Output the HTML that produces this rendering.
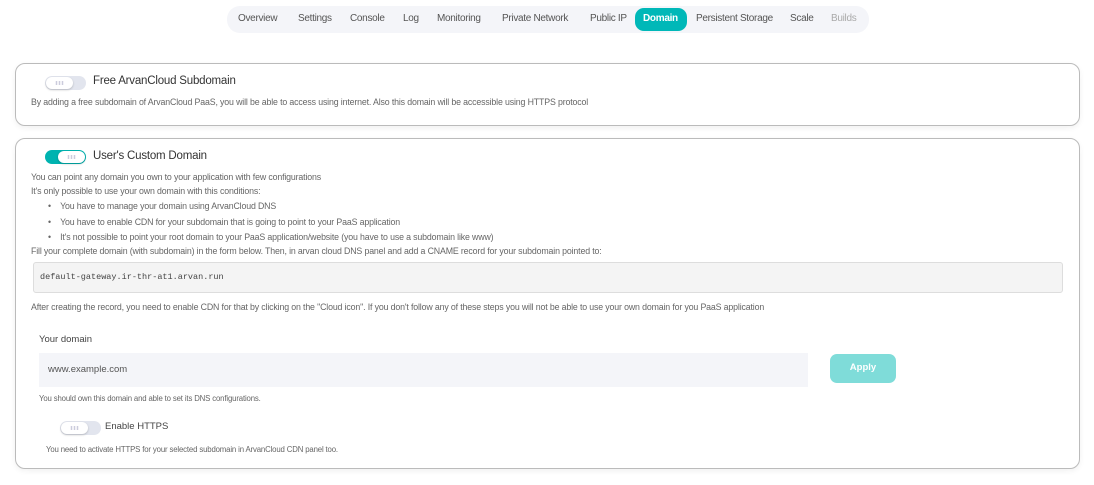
<!DOCTYPE html>
<html><head><style>
*{margin:0;padding:0;box-sizing:border-box}
body{width:1094px;height:485px;background:#fff;font-family:"Liberation Sans",sans-serif;color:#555;position:relative;overflow:hidden}
.a{position:absolute;white-space:nowrap}
.s{font-size:8.8px;letter-spacing:-0.15px;color:#666}
.nav{position:absolute;left:227px;top:6px;width:642px;height:27px;background:#f4f5f9;border-radius:13px}
.nav span{position:absolute;top:7px;font-size:10px;letter-spacing:-0.3px;color:#555}
.card{position:absolute;left:15px;width:1065px;border:1px solid #bbb;border-radius:10px;box-shadow:0 2px 6px rgba(0,0,0,.06)}
.tg{position:absolute;width:41px;height:14px;border-radius:7px;background:#e2e5ee}
.tg i{position:absolute;top:1px;width:27px;height:12px;border-radius:6px;background:#fff;box-shadow:0 1px 2px rgba(0,0,0,.2)}
.tg i:after{content:"";position:absolute;left:9px;top:4px;width:9px;height:4px;background:radial-gradient(circle,#ccd 0.8px,transparent 1px) 0 0/3px 2px}
.h{font-size:11.5px;color:#333;letter-spacing:-0.2px}
</style></head><body>
<div class="nav">
<span style="left:11px">Overview</span><span style="left:71px">Settings</span><span style="left:123px">Console</span><span style="left:176px">Log</span><span style="left:210px">Monitoring</span><span style="left:275px">Private Network</span><span style="left:363px">Public IP</span>
<div style="position:absolute;left:408px;top:2px;width:52px;height:23px;border-radius:9px;background:#00b8b8"></div>
<span style="left:416px;color:#fff;font-weight:bold">Domain</span>
<span style="left:469px">Persistent Storage</span><span style="left:563px">Scale</span><span style="left:604px;color:#aaa">Builds</span>
</div>
<div class="card" style="top:63px;height:63px"></div>
<div class="tg" style="left:45px;top:76px"><i style="left:1px"></i></div>
<div class="a h" style="left:93px;top:75px">Free ArvanCloud Subdomain</div>
<div class="a s" style="left:31px;top:97px">By adding a free subdomain of ArvanCloud PaaS, you will be able to access using internet. Also this domain will be accessible using HTTPS protocol</div>

<div class="card" style="top:138px;height:331px"></div>
<div class="tg" style="left:45px;top:150px;background:#00b3b0"><i style="left:13px"></i></div>
<div class="a h" style="left:93px;top:150px">User's Custom Domain</div>
<div class="a s" style="left:31px;top:172px">You can point any domain you own to your application with few configurations</div>
<div class="a s" style="left:31px;top:186px">It's only possible to use your own domain with this conditions:</div>
<div class="a s" style="left:48px;top:201px">•&nbsp;&nbsp;&nbsp;&nbsp;You have to manage your domain using ArvanCloud DNS</div>
<div class="a s" style="left:48px;top:217px">•&nbsp;&nbsp;&nbsp;&nbsp;You have to enable CDN for your subdomain that is going to point to your PaaS application</div>
<div class="a s" style="left:48px;top:232px">•&nbsp;&nbsp;&nbsp;&nbsp;It's not possible to point your root domain to your PaaS application/website (you have to use a subdomain like www)</div>
<div class="a s" style="left:31px;top:246px">Fill your complete domain (with subdomain) in the form below. Then, in arvan cloud DNS panel and add a CNAME record for your subdomain pointed to:</div>
<div class="a" style="left:33px;top:262px;width:1030px;height:31px;background:#f4f4f4;border:1px solid #ddd;border-radius:3px"></div>
<div class="a" style="left:40px;top:272px;font-family:'Liberation Mono',monospace;font-size:8.5px;color:#444">default-gateway.ir-thr-at1.arvan.run</div>
<div class="a s" style="left:31px;top:302px">After creating the record, you need to enable CDN for that by clicking on the "Cloud icon". If you don't follow any of these steps you will not be able to use your own domain for you PaaS application</div>
<div class="a" style="left:39px;top:334px;font-size:9.5px;color:#444">Your domain</div>
<div class="a" style="left:39px;top:353px;width:769px;height:34px;background:#f4f5f9"></div>
<div class="a" style="left:48px;top:364px;font-size:9.5px;color:#555">www.example.com</div>
<div class="a" style="left:830px;top:354px;width:66px;height:29px;border-radius:7px;background:#7fdcd9;color:#fff;font-size:9.5px;font-weight:bold;text-align:center;line-height:27px">Apply</div>
<div class="a s" style="left:39px;top:394px;font-size:7.8px">You should own this domain and able to set its DNS configurations.</div>
<div class="tg" style="left:60px;top:421px"><i style="left:1px"></i></div>
<div class="a" style="left:105px;top:421px;font-size:9.5px;color:#444">Enable HTTPS</div>
<div class="a s" style="left:46px;top:445px;font-size:7.8px">You need to activate HTTPS for your selected subdomain in ArvanCloud CDN panel too.</div>
</body></html>
